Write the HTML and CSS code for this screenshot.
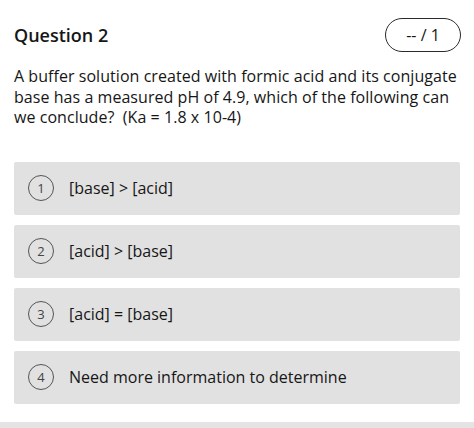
FILE: index.html
```html
<!DOCTYPE html>
<html>
<head>
<meta charset="utf-8">
<link rel="stylesheet" href="styles.css">
</head>
<body>
<div class="card">
  <div class="header">
    <h2 class="title">Question 2</h2>
    <div class="score">-- / 1</div>
  </div>
  <p class="prompt">A buffer solution created with formic acid and its conjugate base has a measured pH of 4.9, which of the following can we conclude?&nbsp; (Ka = 1.8 x 10-4)</p>
  <div class="options">
    <div class="option"><span class="num">1</span><span class="label">[base] &gt; [acid]</span></div>
    <div class="option"><span class="num">2</span><span class="label">[acid] &gt; [base]</span></div>
    <div class="option"><span class="num">3</span><span class="label">[acid] = [base]</span></div>
    <div class="option"><span class="num">4</span><span class="label">Need more information to determine</span></div>
  </div>
</div>
<div class="footer"></div>
</body>
</html>
```
FILE: styles.css
```css
html, body {
  margin: 0;
  padding: 0;
  background: #ffffff;
}
body {
  font-family: "Open Sans", "Liberation Sans", sans-serif;
  color: #161616;
  width: 474px;
  height: 428px;
  overflow: hidden;
  display: flex;
  flex-direction: column;
}
.card {
  flex: 1;
  padding: 18px 14px 0 14px;
}
.header {
  display: flex;
  justify-content: space-between;
  align-items: center;
  height: 34px;
}
.title {
  margin: 0;
  font-size: 18px;
  font-weight: 600;
  line-height: 34px;
}
.score {
  box-sizing: border-box;
  width: 76px;
  height: 34px;
  border: 1.5px solid #2a2a2a;
  border-radius: 17px;
  display: flex;
  align-items: center;
  justify-content: center;
  font-size: 16px;
  margin-right: -1px;
}
.prompt {
  margin: 14px 0 0 0;
  font-size: 16px;
  line-height: 20.7px;
  letter-spacing: 0.05px;
}
.options {
  margin-top: 34px;
  display: flex;
  flex-direction: column;
  gap: 10.5px;
}
.option {
  background: #e1e1e1;
  height: 52.5px;
  display: flex;
  align-items: center;
  padding-left: 14px;
  border-radius: 2px;
}
.num {
  box-sizing: border-box;
  width: 26px;
  height: 26px;
  border: 1.3px solid #555;
  border-radius: 50%;
  display: flex;
  align-items: center;
  justify-content: center;
  font-size: 13px;
  color: #444;
}
.label {
  margin-left: 15px;
  font-size: 16px;
}
.footer {
  height: 6px;
  background: #e4e4e4;
}
```
